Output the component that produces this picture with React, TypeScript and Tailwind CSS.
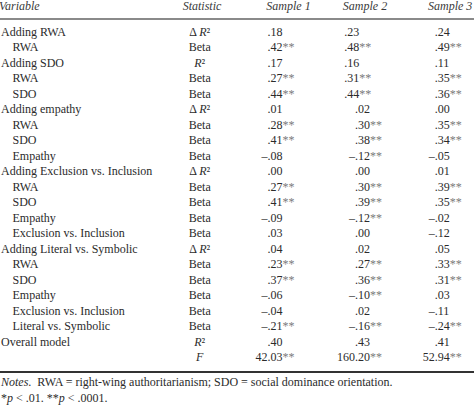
import React from "react";

type Row = {
  label: string;
  indent?: boolean;
  stat: "dr2" | "r2" | "beta" | "f";
  values: [string, string, string];
  shift2?: boolean;
};

const rows: Row[] = [
  { label: "Adding RWA", stat: "dr2", values: [".18", ".23", ".24"], shift2: true },
  { label: "RWA", indent: true, stat: "beta", values: [".42**", ".48**", ".49**"], shift2: true },
  { label: "Adding SDO", stat: "r2", values: [".17", ".16", ".11"], shift2: true },
  { label: "RWA", indent: true, stat: "beta", values: [".27**", ".31**", ".35**"], shift2: true },
  { label: "SDO", indent: true, stat: "beta", values: [".44**", ".44**", ".36**"], shift2: true },
  { label: "Adding empathy", stat: "dr2", values: [".01", ".02", ".00"] },
  { label: "RWA", indent: true, stat: "beta", values: [".28**", ".30**", ".35**"] },
  { label: "SDO", indent: true, stat: "beta", values: [".41**", ".38**", ".34**"] },
  { label: "Empathy", indent: true, stat: "beta", values: ["–.08", "–.12**", "–.05"] },
  { label: "Adding Exclusion vs. Inclusion", stat: "dr2", values: [".00", ".00", ".01"] },
  { label: "RWA", indent: true, stat: "beta", values: [".27**", ".30**", ".39**"] },
  { label: "SDO", indent: true, stat: "beta", values: [".41**", ".39**", ".35**"] },
  { label: "Empathy", indent: true, stat: "beta", values: ["–.09", "–.12**", "–.02"] },
  { label: "Exclusion vs. Inclusion", indent: true, stat: "beta", values: [".03", ".00", "–.12"] },
  { label: "Adding Literal vs. Symbolic", stat: "dr2", values: [".04", ".02", ".05"] },
  { label: "RWA", indent: true, stat: "beta", values: [".23**", ".27**", ".33**"] },
  { label: "SDO", indent: true, stat: "beta", values: [".37**", ".36**", ".31**"] },
  { label: "Empathy", indent: true, stat: "beta", values: ["–.06", "–.10**", ".03"] },
  { label: "Exclusion vs. Inclusion", indent: true, stat: "beta", values: ["–.04", ".02", "–.11"] },
  { label: "Literal vs. Symbolic", indent: true, stat: "beta", values: ["–.21**", "–.16**", "–.24**"] },
  { label: "Overall model", stat: "r2", values: [".40", ".43", ".41"] },
  { label: "", stat: "f", values: ["42.03**", "160.20**", "52.94**"] },
];

function Stat({ kind }: { kind: Row["stat"] }) {
  if (kind === "beta") return <span>Beta</span>;
  if (kind === "f") return <i>F</i>;
  if (kind === "r2")
    return (
      <span>
        <i>R</i>²
      </span>
    );
  return (
    <span>
      Δ <i>R</i>²
    </span>
  );
}

// split "–.12**" into "–", ".12", "**" so the decimal points line up
function splitValue(v: string) {
  const dot = v.indexOf(".");
  const rest = v.slice(dot);
  const star = rest.indexOf("*");
  return {
    whole: v.slice(0, dot),
    frac: star === -1 ? rest : rest.slice(0, star),
    stars: star === -1 ? "" : rest.slice(star),
  };
}

function Value({ v, wholeCls, fracCls }: { v: string; wholeCls: string; fracCls: string }) {
  const p = splitValue(v);
  return (
    <>
      <span className={wholeCls}>{p.whole}</span>
      <span className={fracCls}>
        {p.frac}
        <span className="text-[#7a7a7a]">{p.stars}</span>
      </span>
    </>
  );
}

export default function App() {
  return (
    <div
      className="w-[474px] h-[405px] overflow-hidden bg-white text-[12px] text-[#2b2b2b]"
      style={{ fontFamily: '"Liberation Serif", "Times New Roman", serif' }}
    >
      <div className="flex h-[13px] leading-[13px] italic text-[#3a3a3a] whitespace-nowrap">
        <span className="w-[180px] -ml-[1px]">Variable</span>
        <span className="w-[46px] text-center">Statistic</span>
        <span className="w-[40px]" />
        <span className="w-[47px] text-center">Sample 1</span>
        <span className="w-[30px]" />
        <span className="w-[46px] text-center">Sample 2</span>
        <span className="w-[40px]" />
        <span>Sample 3</span>
      </div>
      <div className="mt-[5px] h-[2px] bg-[#8a8a8a]" />

      <div className="pt-[4.5px]">
        {rows.map((r, i) => (
          <div key={i} className="flex h-[15.5px] leading-[15.5px] whitespace-nowrap">
            <span className={r.indent ? "w-[180px] pl-[12.5px]" : "w-[180px] pl-[1px]"}>
              {r.label}
            </span>
            <span className="w-[46px] text-center">
              <Stat kind={r.stat} />
            </span>
            <Value v={r.values[0]} wholeCls="w-[46px] text-right" fracCls="w-[58px]" />
            {r.shift2 ? (
              <Value v={r.values[1]} wholeCls="w-[20px] text-right" fracCls="w-[73px]" />
            ) : (
              <Value v={r.values[1]} wholeCls="w-[31px] text-right" fracCls="w-[62px]" />
            )}
            <Value v={r.values[2]} wholeCls="w-[19px] text-right" fracCls="w-[40px]" />
          </div>
        ))}
      </div>

      <div className="mt-[5px] h-[2px] bg-[#333]" />

      <div className="pt-[1px] leading-[16px] pl-[1px] whitespace-nowrap">
        <div>
          <i>Notes</i>.&nbsp; RWA = right-wing authoritarianism; SDO = social dominance orientation.
        </div>
        <div>
          *<i>p</i> &lt; .01. **<i>p</i> &lt; .0001.
        </div>
      </div>
    </div>
  );
}
